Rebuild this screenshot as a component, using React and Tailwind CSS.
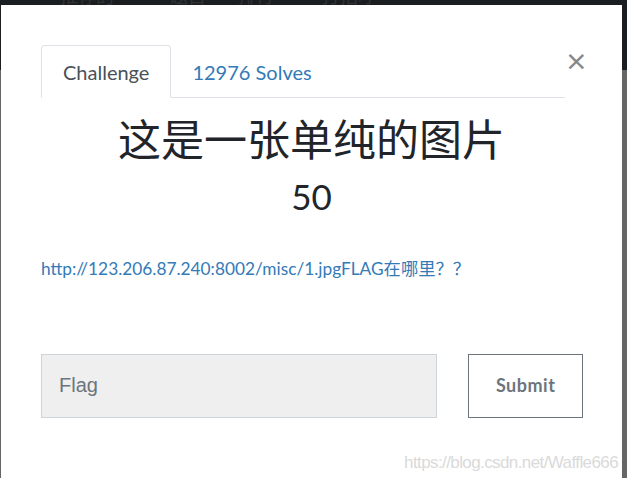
import React, { useState } from 'react';

const App = () => {
  const [flag, setFlag] = useState('');

  return (
    <div className="relative w-[627px] h-[478px] overflow-hidden bg-[#666666] font-['Lato','Noto_Sans_CJK_SC',sans-serif]">
      {/* pagina por trás do modal */}
      <div className="h-[70px] bg-[#1b1e21] relative">
        <div className="absolute -top-[18px] left-[60px] flex gap-8 text-[18px] text-[#303336] font-['Noto_Sans_CJK_SC',sans-serif]">
          <span>推荐的</span>
          <span className="ml-6">题目</span>
          <span>排行</span>
          <span className="ml-4">打招呼</span>
        </div>
      </div>

      {/* modal */}
      <div className="absolute left-[1px] top-[5px] w-[621px] h-[480px] bg-white">
        <div className="pl-[40px] pr-[39px] pt-[40px]">
          <div className="flex items-end">
            <div className="flex flex-1 border-b border-[#dee2e6]">
              <button className="-mb-px h-[53px] px-[21px] text-[20px] text-[#495057] bg-white border border-[#dee2e6] border-b-white rounded-t-[4px]">
                Challenge
              </button>
              <button className="-mb-px h-[53px] px-[21px] text-[20px] text-[#337ab7]">
                12976 Solves
              </button>
            </div>
            <button className="self-start mt-[2px] w-[18px] text-[27px] leading-none text-[#888888] font-['DejaVu_Sans',sans-serif]">
              ×
            </button>
          </div>
        </div>

        <h2 className="mt-[13px] text-center text-[43px] leading-[52px] text-[#212529] font-['Noto_Sans_CJK_SC',sans-serif]">
          这是一张单纯的图片
        </h2>
        <p className="mt-[11px] text-center text-[35px] leading-[44px] text-[#212529]">50</p>

        <div className="mt-[38px] pl-[40px]">
          <a href="#" className="text-[17.3px] text-[#337ab7]">
            http://123.206.87.240:8002/misc/1.jpgFLAG在哪里？？
          </a>
        </div>

        <form className="mt-[72px] pl-[40px] pr-[39px] flex gap-[31px]" onSubmit={(e) => e.preventDefault()}>
          <input
            className="w-[397px] h-[64px] px-[17px] bg-[#efefef] border border-[#cfd4d9] text-[20px] text-[#495057] placeholder-[#6c757d] outline-none font-['Liberation_Sans',sans-serif]"
            placeholder="Flag"
            value={flag}
            onChange={(e) => setFlag(e.target.value)}
          />
          <button
            type="submit"
            className="w-[115px] h-[64px] border border-[#6c757d] text-[18px] font-bold text-[#6c757d] tracking-[0.5px]"
          >
            Submit
          </button>
        </form>
      </div>

      <div className="absolute right-[9px] top-[450px] text-[17px] text-[#dadada] tracking-[-0.6px] font-['Liberation_Sans',sans-serif]">
        https://blog.csdn.net/Waffle666
      </div>
    </div>
  );
};

export default App;
